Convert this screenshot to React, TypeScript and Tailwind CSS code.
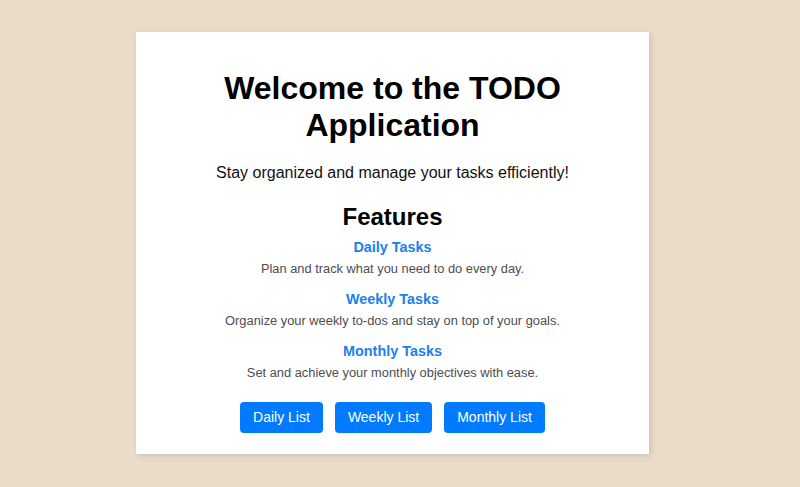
export default function App() {
  const features = [
    { title: "Daily Tasks", text: "Plan and track what you need to do every day." },
    { title: "Weekly Tasks", text: "Organize your weekly to-dos and stay on top of your goals." },
    { title: "Monthly Tasks", text: "Set and achieve your monthly objectives with ease." },
  ];

  return (
    <div className="min-h-screen bg-[#eadcc8] pt-[32px] font-['Liberation_Sans',Arial,sans-serif]">
      {/* Card */}
      <div className="ml-[136px] w-[513px] bg-white pt-[38px] pb-[21px] text-center shadow-[2px_2px_6px_rgba(0,0,0,0.12)]">
        <h1 className="mx-auto w-[400px] text-[32px] font-bold leading-[37px] text-black">
          Welcome to the TODO Application
        </h1>
        <p className="mt-[20px] text-[16px] leading-[18px] text-[#111]">
          Stay organized and manage your tasks efficiently!
        </p>

        <h2 className="mt-[21px] text-[24px] font-bold leading-[28px] text-black">Features</h2>
        <div className="mt-[8px] flex flex-col gap-[15px]">
          {features.map((f) => (
            <div key={f.title}>
              <h3 className="text-[14.4px] font-bold leading-[17px] text-[#1a7ff0]">{f.title}</h3>
              <p className="mt-[5px] text-[12.85px] leading-[15px] text-[#4d4d4d]">{f.text}</p>
            </div>
          ))}
        </div>

        {/* Buttons */}
        <div className="mt-[22px] flex justify-center gap-[12px]">
          <button className="h-[31px] rounded-[4px] bg-[#007bff] px-[13px] text-[14px] text-white">Daily List</button>
          <button className="h-[31px] rounded-[4px] bg-[#007bff] px-[13px] text-[14px] text-white">Weekly List</button>
          <button className="h-[31px] rounded-[4px] bg-[#007bff] px-[13px] text-[14px] text-white">Monthly List</button>
        </div>
      </div>
    </div>
  );
}
